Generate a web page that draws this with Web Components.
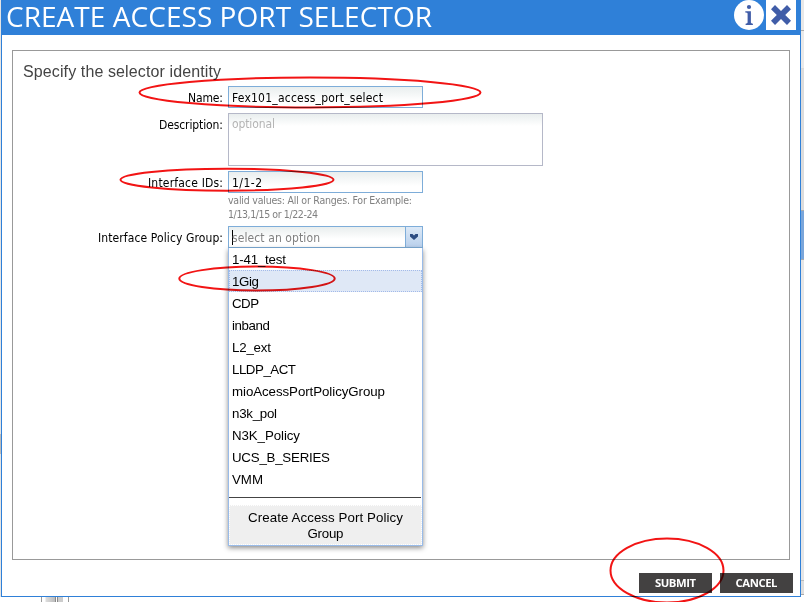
<!DOCTYPE html>
<html lang="en">
<head>
<meta charset="utf-8">
<title>Create Access Port Selector</title>
<style>
  html, body { margin: 0; padding: 0; }
  body {
    width: 804px; height: 602px; overflow: hidden; position: relative; background: #fff;
    font-family: "DejaVu Sans Condensed", "DejaVu Sans", sans-serif; font-size: 12px; color: #000;
  }
</style>
</head>
<body>
<app-page>
  <access-dialog heading="CREATE ACCESS PORT SELECTOR">
    <form-row label="Name:" label-width="35" height="22" gap="5">
      <text-field value="Fex101_access_port_select" run="151"></text-field>
    </form-row>
    <form-row label="Description:" label-width="64" height="53" gap="5">
      <text-field value="optional" run="43" area></text-field>
    </form-row>
    <form-row label="Interface IDs:" label-width="75" height="55" gap="0">
      <text-field value="1/1-2" run="30"></text-field>
      <field-hint></field-hint>
    </form-row>
    <form-row label="Interface Policy Group:" label-width="125" height="22" gap="0">
      <policy-select placeholder="select an option"></policy-select>
    </form-row>
    <dark-button slot="actions" run="41">SUBMIT</dark-button>
    <dark-button slot="actions" run="42">CANCEL</dark-button>
  </access-dialog>
</app-page>
<mark-layer></mark-layer>

<script>
(function () {
  function define(name, render, after) {
    customElements.define(name, class extends HTMLElement {
      connectedCallback() {
        if (this.shadowRoot) return;
        var root = this.attachShadow({ mode: 'open' });
        var tpl = document.createElement('template');
        tpl.innerHTML = render(this);
        root.appendChild(tpl.content.cloneNode(true));
        if (after) after(this, root);
      }
    });
  }

  // One line of text spread to a fixed width through letter-spacing.
  define('text-run', function () {
    return '<style>:host{display:inline-block;white-space:pre;}span{display:inline-block;}</style><span><slot></slot></span>';
  }, function (el, root) {
    var span = root.querySelector('span');
    var want = parseFloat(el.getAttribute('width'));
    var len = el.textContent.length;
    var have = span.getBoundingClientRect().width;
    if (want && have && len > 1) {
      var ls = (want - have) / (len - 1);
      span.style.letterSpacing = ls + 'px';
      span.style.marginRight = -ls + 'px';
    }
  });

  // The strips of the page that stay visible round the dialog.
  define('app-page', function () {
    return [
      '<style>',
      ':host{display:grid;grid-template-columns:1px 800px 3px;grid-template-rows:597px 5px;width:804px;height:602px;}',
      '.left{background:linear-gradient(#e4e4e4 0 434px,#bbb 434px 454px,#e4e4e4 454px);}',
      '.right{background:linear-gradient(#e8e8e8 0 30px,#aaa 30px 31px,#e9e9e9 31px 68px,#d9d9d9 68px 69px,#dcdcdc 69px 210px,#aaa 210px 211px,#7ba6da 211px 259px,#aaa 259px 260px,#e6e6e6 260px 580px,#bbb 580px 581px,#ddd 581px 594px,#aaa 594px 595px,#fff 595px);}',
      '.foot{grid-column:1/4;display:flex;padding-left:41px;}',
      '.bar{width:26px;border-left:1px solid #999;border-right:1px solid #999;background:linear-gradient(90deg,#fff 0 3px,#ddd 4px,#bbb 13px,#888 13px 14px,#fff 14px 15px,#888 15px 16px,#ccc 16px 21px,#fff 21px);}',
      '</style>',
      '<div class="left"></div><slot></slot><div class="right"></div>',
      '<div class="foot"><div class="bar"></div></div>'
    ].join('');
  });

  define('access-dialog', function (el) {
    return [
      '<style>',
      ':host{display:flex;flex-direction:column;box-sizing:border-box;height:597px;border:1px solid #2f80d8;border-top:0;background:#fff;}',
      'header{display:flex;height:35px;background:#2f80d8;color:#fff;font:28px/32px "Open Sans",sans-serif;padding-left:4px;}',
      'header svg{margin-left:auto;width:66px;flex:none;height:30px;}',
      '.box{box-sizing:border-box;height:510px;margin:15px 10px 0;border:1px solid #999;padding:10px 10px 0;}',
      'h2{margin:0;font:16px/22px "Liberation Sans",Arial,sans-serif;color:#444;height:25px;}',
      '.body{display:flex;flex-direction:column;}',
      'footer{display:flex;justify-content:flex-end;gap:8px;padding:13px 7px 0 0;}',
      '</style>',
      '<header><text-run width="426">' + el.getAttribute('heading') + '</text-run>',
      '<svg viewBox="0 0 66 30"><circle cx="15" cy="15" r="15" fill="#fff"/><rect x="32" width="30" height="30" fill="#fff"/>',
      '<circle cx="15" cy="7" r="2.1" fill="#405da8"/><path d="M11.3 11.2h5.6V22.6q0 1 2 1.1V25h-7.3v-1.3q2-.1 2-1.1V13.6q0-1-2.3-1.1z" fill="#405da8"/>',
      '<path d="M41 5 47 11 53 5 57 9.2 51.2 15 57 20.8 53 25 47 19 41 25 37 20.8 42.8 15 37 9.2z" fill="#405da8"/></svg></header>',
      '<div class="box"><h2><text-run width="198">Specify the selector identity</text-run></h2><div class="body"><slot></slot></div></div>',
      '<footer><slot name="actions"></slot></footer>'
    ].join('');
  });

  define('form-row', function (el) {
    return [
      '<style>',
      ':host{display:flex;height:' + el.getAttribute('height') + 'px;margin-bottom:' + el.getAttribute('gap') + 'px;}',
      '.label{flex:none;width:200px;margin-right:5px;text-align:right;line-height:24px;}',
      '.content{display:flex;flex-direction:column;align-items:flex-start;}',
      '</style>',
      '<div class="label"><text-run width="' + el.getAttribute('label-width') + '">' + el.getAttribute('label') + '</text-run></div>',
      '<div class="content"><slot></slot></div>'
    ].join('');
  });

  define('text-field', function (el) {
    var area = el.hasAttribute('area');
    return [
      '<style>',
      ':host{display:block;box-sizing:border-box;padding-left:3px;',
      area ? 'width:315px;height:53px;border:1px solid #b5b8c8;color:#b4b4b4;line-height:21px;'
           : 'width:195px;height:22px;border:1px solid #7eadd9;line-height:23px;',
      'background:linear-gradient(#e9eeee,#fff ' + (area ? 12 : 14) + 'px);}',
      '</style>',
      '<text-run width="' + el.getAttribute('run') + '">' + el.getAttribute('value') + '</text-run>'
    ].join('');
  });

  define('field-hint', function () {
    return '<style>:host{display:flex;flex-direction:column;font-size:10.5px;line-height:14px;color:#808080;}</style>' +
      '<text-run width="184">valid values: All or Ranges. For Example:</text-run>' +
      '<text-run width="90">1/13,1/15 or 1/22-24</text-run>';
  });

  var OPTIONS = [['1-41_test', 54], ['1Gig', 27], ['CDP', 27], ['inband', 38], ['L2_ext', 39], ['LLDP_ACT', 64],
    ['mioAcessPortPolicyGroup', 153], ['n3k_pol', 45], ['N3K_Policy', 68], ['UCS_B_SERIES', 98], ['VMM', 31]];

  define('policy-select', function (el) {
    return [
      '<style>',
      ':host{display:block;width:195px;position:relative;}',
      '.field{display:flex;box-sizing:border-box;height:22px;border:1px solid #7eadd9;color:#808080;line-height:23px;background:linear-gradient(#e9eeee,#fff 12px);}',
      '.caret{width:1px;height:15px;margin:3px -1px 0 3px;background:#000;}',
      '.trigger{margin-left:auto;width:16px;border-left:1px solid #7eadd9;background:linear-gradient(#dce9f7,#b9d0ec);}',
      '.trigger svg{display:block;width:16px;height:20px;}',
      '.list{position:absolute;left:0;top:22px;box-sizing:border-box;width:195px;height:298px;border:1px solid #99bbe8;border-top:0;background:#fff;box-shadow:0 2px 5px rgba(0,0,0,.45);color:#000;font:13.3px/22px "Liberation Sans",Arial,sans-serif;}',
      '.item{box-sizing:border-box;height:22px;padding:0 2px;border:1px solid #fff;}',
      '.item.on{background:#dfe8f6;border:1px dotted #a3bae9;}',
      '.line{margin:7px 1px 7px 0;border-top:1px solid #444;}',
      '.new{box-sizing:border-box;height:40px;border:1px dotted #fff;background:#efefef;text-align:center;line-height:16px;padding-top:4px;}',
      '.new text-run{display:block;}',
      '</style>',
      '<div class="field"><span class="caret"></span><text-run width="88">' + el.getAttribute('placeholder') + '</text-run>',
      '<span class="trigger"><svg viewBox="0 0 16 20"><path d="M4 7h2.5L8 8.5 9.500 7H12v2.500L8 13 4 9.500z" fill="#2c4d83"/></svg></span></div>',
      '<div class="list">',
      OPTIONS.map(function (o) {
        return '<div class="item' + (o[0] === '1Gig' ? ' on' : '') + '"><text-run width="' + o[1] + '">' + o[0] + '</text-run></div>';
      }).join(''),
      '<div class="line"></div>',
      '<div class="new"><text-run width="155">Create Access Port Policy</text-run><text-run width="36">Group</text-run></div>',
      '</div>'
    ].join('');
  });

  define('dark-button', function (el) {
    return [
      '<style>:host{display:flex;justify-content:center;width:73px;height:20px;background:#434141;color:#fff;font:bold 11.3px/20px "Open Sans",sans-serif;}</style>',
      '<text-run width="' + el.getAttribute('run') + '">' + el.textContent + '</text-run>'
    ].join('');
  });

  // Red pen marks laid over the whole page.
  define('mark-layer', function () {
    return [
      '<style>:host{position:absolute;left:0;top:0;pointer-events:none;mix-blend-mode:multiply;}svg{display:block;}</style>',
      '<svg width="804" height="602" fill="none" stroke="#f21414" stroke-width="2">',
      '<ellipse cx="310" cy="92.5" rx="170.5" ry="15"/>',
      '<ellipse cx="227" cy="179.7" rx="106.5" ry="11"/>',
      '<ellipse cx="257" cy="278.6" rx="77.7" ry="12"/>',
      '<ellipse cx="667" cy="570.5" rx="56.5" ry="32"/>',
      '</svg>'
    ].join('');
  });
})();
</script>
</body>
</html>
